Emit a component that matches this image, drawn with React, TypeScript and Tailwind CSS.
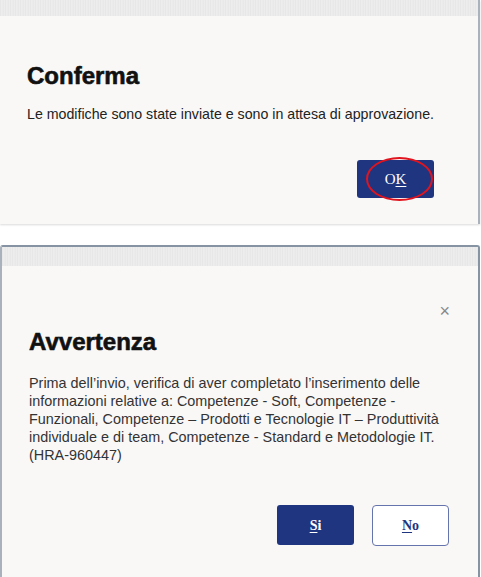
import React from "react";

const band =
  "bg-[#ebebeb] bg-[repeating-linear-gradient(90deg,#e4e4e4_0px,#f0f0f0_2px,#e6e6e6_3px,#efefef_5px)]";

function Underlined({ first, rest }: { first: string; rest: string }) {
  return (
    <span>
      <span className="underline underline-offset-2">{first}</span>
      {rest}
    </span>
  );
}

export default function App() {
  return (
    <div className="w-[481px] h-[577px] bg-white flex flex-col font-['Liberation_Sans',Arial,sans-serif]">
      {/* Conferma dialog */}
      <div className="h-[224px] w-[480px] bg-[#f9f8f7] border-r-2 border-r-[#aab3bd] shadow-[0_1px_2px_rgba(0,0,0,0.15)] flex flex-col">
        <div className={`h-[16px] ${band}`} />
        <div className="pl-[27px] pr-[44px] pt-[46px] flex flex-col">
          <h2 className="text-[24px] leading-[28px] font-bold text-[#111] [-webkit-text-stroke:0.6px_#111]">Conferma</h2>
          <p className="mt-[14px] text-[14.2px] leading-[20px] text-[#222]">
            Le modifiche sono state inviate e sono in attesa di approvazione.
          </p>
          <div className="mt-[36px] flex justify-end">
            <div className="relative">
              <button className="w-[77px] h-[38px] rounded-[3px] bg-[#1f3580] text-white text-[15px] font-['Liberation_Serif',serif]">
                O<span className="underline underline-offset-2">K</span>
              </button>
              <span className="absolute left-[9px] top-[-3px] w-[67px] h-[44px] rounded-[50%] border-2 border-[#e0141e] pointer-events-none" />
            </div>
          </div>
        </div>
      </div>

      <div className="h-[21px]" />

      {/* Avvertenza dialog */}
      <div className="flex-1 w-[480px] bg-[#f9f8f7] border-t-2 border-x-2 border-[#8593a2] border-l-[#a9b2bc] rounded-t-[3px] flex flex-col">
        <div className={`h-[19px] ${band}`} />
        <div className="pl-[27px] pr-[29px] flex flex-col">
          <div className="h-[54px] flex items-end justify-end">
            <span className="text-[#888] text-[18px] leading-[18px] mr-[-1px]">×</span>
          </div>
          <h2 className="mt-[8px] text-[24px] leading-[28px] font-bold text-[#111] [-webkit-text-stroke:0.6px_#111]">Avvertenza</h2>
          <p className="mt-[18px] text-[14.4px] leading-[18px] text-[#333]">
            Prima dell’invio, verifica di aver completato l’inserimento delle informazioni relative a: Competenze - Soft, Competenze - Funzionali, Competenze – Prodotti e Tecnologie IT – Produttività individuale e di team, Competenze - Standard e Metodologie IT. (HRA-960447)
          </p>
          <div className="mt-[41px] flex justify-end gap-[18px]">
            <button className="w-[77px] h-[40px] rounded-[3px] bg-[#1f3580] text-white text-[14px] font-bold font-['Liberation_Serif',serif]">
              <Underlined first="S" rest="i" />
            </button>
            <button className="w-[77px] h-[41px] rounded-[4px] bg-white border border-[#6574ad] text-[#1f3580] text-[14px] font-bold font-['Liberation_Serif',serif]">
              <Underlined first="N" rest="o" />
            </button>
          </div>
        </div>
      </div>
    </div>
  );
}
